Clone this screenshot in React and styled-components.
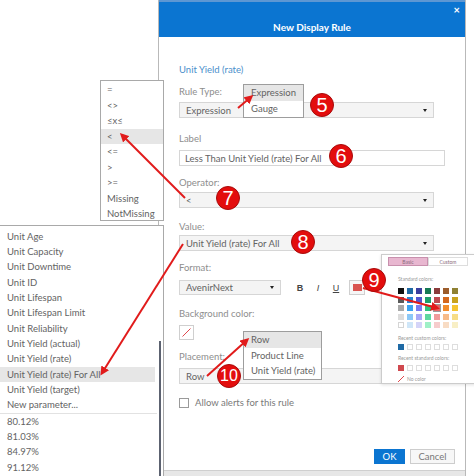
import React from 'react';
import styled, { createGlobalStyle } from 'styled-components';

const GlobalStyle = createGlobalStyle`
  html, body { margin: 0; padding: 0; background: #fff; }
  body { font-family: Lato, "Noto Sans", sans-serif; }
  * { box-sizing: border-box; }
`;

const Page = styled.div`
  position: relative;
  width: 474px;
  height: 476px;
  overflow: hidden;
  background: #fff;
  font-family: Lato, "Noto Sans", sans-serif;
`;

const Dialog = styled.div`
  margin-left: 158px;
  width: 308px;
  height: 476px;
  display: flex;
  flex-direction: column;
  border-left: 1px solid #b9b9b9;
  border-right: 1px solid #b9b9b9;
  background: #fff;
`;

const Header = styled.div`
  height: 37px;
  flex: none;
  background: #0b75d1;
  border-top: 2px solid #5d97d3;
  display: flex;
  flex-direction: column;
  color: #fff;
`;

const CloseRow = styled.div`
  height: 14px;
  display: flex;
  justify-content: flex-end;
  align-items: center;
  padding-right: 5px;
  font-size: 11px;
  font-weight: 700;
  line-height: 1;
`;

const Title = styled.div`
  margin-top: 4px;
  text-align: center;
  font-size: 10px;
  font-weight: 700;
  line-height: 14px;
`;

const Body = styled.div`
  flex: 1;
  display: flex;
  flex-direction: column;
  padding: 26px 10px 6px 20px;
`;

const BottomStrip = styled.div`
  height: 6px;
  flex: none;
  background: #e7e7e7;
  border-top: 1px solid #cfcfcf;
`;

const RuleTitle = styled.div`
  font-size: 9.5px;
  line-height: 14px;
  color: #4b8fcb;
`;

const FieldLabel = styled.div`
  margin-top: ${p => p.$mt}px;
  font-size: 9.5px;
  line-height: 13px;
  height: 13px;
  color: #8e8e8e;
`;

const Select = styled.div`
  margin-top: ${p => p.$mt}px;
  width: ${p => p.$w || 255}px;
  height: ${p => p.$h || 16}px;
  display: flex;
  align-items: center;
  justify-content: space-between;
  padding: 0 6px 0 6px;
  background: #f4f4f4;
  border: 1px solid #d6d6d6;
  font-size: 9.5px;
  color: #636363;
`;

const Caret = styled.span`
  width: 0;
  height: 0;
  border-left: 2px solid transparent;
  border-right: 2px solid transparent;
  border-top: 3px solid #222;
`;

const TextInput = styled.div`
  margin-top: ${p => p.$mt}px;
  width: 266px;
  height: 16px;
  display: flex;
  align-items: center;
  padding: 0 5px;
  background: #fff;
  border: 1px solid #d6d6d6;
  font-size: 9.5px;
  color: #636363;
`;

const FormatRow = styled.div`
  margin-top: 6px;
  display: flex;
  align-items: center;
  height: 15px;
`;

const StyleToggle = styled.span`
  width: 18px;
  text-align: center;
  font-family: "Liberation Sans", Arial, sans-serif;
  font-size: 9px;
  color: #444;
  font-weight: ${p => (p.$b ? 700 : 400)};
  font-style: ${p => (p.$i ? 'italic' : 'normal')};
  text-decoration: ${p => (p.$u ? 'underline' : 'none')};
`;

const ColorButton = styled.div`
  margin-left: 4px;
  width: 16px;
  height: 15px;
  border: 1px solid #cfcfcf;
  background: #f6f6f6;
  display: flex;
  align-items: center;
  justify-content: center;
  &::after {
    content: '';
    width: 9px;
    height: 7px;
    background: #d9534f;
  }
`;

const NoColorSwatch = styled.div`
  margin-top: 5px;
  width: 15px;
  height: 15px;
  border: 1px solid #cfcfcf;
  display: flex;
  align-items: center;
  justify-content: center;
`;

const CheckRow = styled.label`
  margin-top: 13px;
  display: flex;
  align-items: center;
  gap: 6px;
  font-size: 9.5px;
  color: #7a7a7a;
`;

const CheckBox = styled.span`
  width: 10px;
  height: 10px;
  border: 1px solid #9a9a9a;
  background: #fff;
`;

const ButtonRow = styled.div`
  margin-top: auto;
  display: flex;
  justify-content: flex-end;
  gap: 5px;
`;

const Button = styled.button`
  height: 15px;
  padding: 0;
  width: ${p => p.$w}px;
  font-family: Lato, "Noto Sans", sans-serif;
  font-size: 9.5px;
  border: 1px solid ${p => (p.$primary ? '#0b75d1' : '#cdcdcd')};
  background: ${p => (p.$primary ? '#0b75d1' : '#f7f7f7')};
  color: ${p => (p.$primary ? '#fff' : '#777')};
`;

/* dropdown menus laid over the dialog */
const Menu = styled.div`
  position: absolute;
  left: ${p => p.$x}px;
  top: ${p => p.$y}px;
  width: ${p => p.$w}px;
  height: ${p => (p.$h ? `${p.$h}px` : 'auto')};
  background: #fff;
  border: 1px solid ${p => p.$border || '#a9a9a9'};
  padding-top: ${p => p.$pt || 0}px;
  font-size: 9.5px;
  color: #636363;
`;

const MenuItem = styled.div`
  height: ${p => p.$h || 15.5}px;
  line-height: ${p => p.$h || 15.5}px;
  padding-left: ${p => p.$pl || 6}px;
  margin-right: ${p => p.$mr || 0}px;
  white-space: nowrap;
  background: ${p => (p.$active ? '#e6e6e6' : 'transparent')};
`;

const MenuDivider = styled.div`
  margin-right: 6px;
  border-top: 1px solid #e2e2e2;
`;

const ScrollThumb = styled.div`
  position: absolute;
  right: 2px;
  top: 115px;
  width: 2px;
  height: 135px;
  background: #5c6270;
`;

/* color picker */
const Picker = styled.div`
  position: absolute;
  left: 381px;
  top: 254px;
  width: 100px;
  height: 130px;
  background: #fff;
  border: 1px solid #cccccc;
  box-shadow: 0 1px 3px rgba(0, 0, 0, 0.12);
  padding: 2px 0 0 6px;
`;

const Tabs = styled.div`
  display: flex;
`;

const Tab = styled.div`
  width: 40px;
  height: 9px;
  line-height: 8px;
  text-align: center;
  font-size: 5px;
  color: #8a6c7c;
  background: ${p => (p.$active ? '#e8b7d0' : '#fff')};
  border: 1px solid ${p => (p.$active ? '#c890ad' : '#dddddd')};
`;

const PickerSection = styled.div`
  padding-left: 10px;
  display: flex;
  flex-direction: column;
`;

const Tiny = styled.div`
  margin-top: ${p => p.$mt}px;
  font-size: 5px;
  line-height: 6px;
  height: 6px;
  color: #9a9a9a;
  white-space: nowrap;
  display: flex;
  align-items: center;
  gap: 3px;
`;

const ColorGrid = styled.div`
  margin-top: ${p => p.$mt}px;
  display: grid;
  grid-template-columns: repeat(7, 6px);
  column-gap: 3px;
  row-gap: 2.5px;
`;

const Cell = styled.div`
  width: 6px;
  height: 6px;
  background: ${p => p.$c || '#fff'};
  border: ${p => (p.$empty ? '1px solid #dedede' : p.$c === '#ffffff' ? '1px solid #d5d5d5' : 'none')};
  outline: ${p => (p.$sel ? '1px solid #9a9a9a' : 'none')};
`;

const Badge = styled.div`
  position: absolute;
  left: ${p => p.$x - 12}px;
  top: ${p => p.$y - 12}px;
  width: 24px;
  height: 24px;
  border-radius: 50%;
  background: #e30d0d;
  border: 1px solid #a80b0b;
  color: #fff;
  display: flex;
  align-items: center;
  justify-content: center;
  font-family: "Liberation Sans", Arial, sans-serif;
  font-size: ${p => (p.$small ? 16 : 20)}px;
  line-height: 1;
`;

const Overlay = styled.svg`
  position: absolute;
  left: 0;
  top: 0;
  width: 474px;
  height: 476px;
  pointer-events: none;
`;

const operators = ['=', '<>', '≤x≤', '<', '<=', '>', '>=', 'Missing', 'NotMissing'];

const values = [
  'Unit Age',
  'Unit Capacity',
  'Unit Downtime',
  'Unit ID',
  'Unit Lifespan',
  'Unit Lifespan Limit',
  'Unit Reliability',
  'Unit Yield (actual)',
  'Unit Yield (rate)',
  'Unit Yield (rate) For All',
  'Unit Yield (target)',
  'New parameter...',
];

const percents = ['80.12%', '81.03%', '84.97%', '91.12%'];

const standardColors = [
  ['#111111', '#1f6aa5', '#3b3f9f', '#167a54', '#8a3b3b', '#9c5c2b', '#8f8133'],
  ['#5a5a5a', '#2785d4', '#5455cf', '#1d9e6b', '#bf4950', '#d4681e', '#c8a21d'],
  ['#a8a8a8', '#3aa3f2', '#7b7bf0', '#2fc27f', '#e26565', '#f28c2c', '#f5c531'],
  ['#dcdcdc', '#8cc8f7', '#a9a9f7', '#5fd79f', '#f09a9a', '#f7bb88', '#f7dd86'],
  ['#ffffff', '#cfe6f8', '#d4d4f8', '#9ff0c7', '#f6cccc', '#f8dcc4', '#f8efc6'],
];

const arrows = [
  [238, 108, 251, 97],
  [185, 198, 122, 135],
  [183, 244, 102, 373],
  [363, 288, 437, 308],
  [207, 376, 247, 340],
];

const badges = [
  [5, 322, 105],
  [6, 341, 156],
  [7, 228, 198],
  [8, 303, 242],
  [9, 374, 280],
  [10, 229, 376],
];

function RecentRow({ first }) {
  return (
    <ColorGrid $mt={first === '#1f6aa5' ? 3 : 4}>
      {Array.from({ length: 7 }).map((_, i) =>
        i === 0 ? <Cell key={i} $c={first} /> : <Cell key={i} $empty />
      )}
    </ColorGrid>
  );
}

export default function App() {
  return (
    <Page>
      <GlobalStyle />
      <Dialog>
        <Header>
          <CloseRow>×</CloseRow>
          <Title>New Display Rule</Title>
        </Header>
        <Body>
          <RuleTitle>Unit Yield (rate)</RuleTitle>

          <FieldLabel $mt={8}>Rule Type:</FieldLabel>
          <Select $mt={4}>
            <span>Expression</span>
            <Caret />
          </Select>

          <FieldLabel $mt={14}>Label</FieldLabel>
          <TextInput $mt={5}>Less Than Unit Yield (rate) For All</TextInput>

          <FieldLabel $mt={10}>Operator:</FieldLabel>
          <Select $mt={3}>
            <span>&lt;</span>
            <Caret />
          </Select>

          <FieldLabel $mt={12}>Value:</FieldLabel>
          <Select $mt={2}>
            <span>Unit Yield (rate) For All</span>
            <Caret />
          </Select>

          <FieldLabel $mt={10}>Format:</FieldLabel>
          <FormatRow>
            <Select $mt={0} $w={102} $h={15}>
              <span>AvenirNext</span>
              <Caret />
            </Select>
            <span style={{ width: 10 }} />
            <StyleToggle $b>B</StyleToggle>
            <StyleToggle $i>I</StyleToggle>
            <StyleToggle $u>U</StyleToggle>
            <ColorButton />
          </FormatRow>

          <FieldLabel $mt={12}>Background color:</FieldLabel>
          <NoColorSwatch>
            <svg width="9" height="9" viewBox="0 0 9 9">
              <line x1="0.5" y1="8.5" x2="8.5" y2="0.5" stroke="#e0474c" strokeWidth="1" />
            </svg>
          </NoColorSwatch>

          <FieldLabel $mt={10}>Placement:</FieldLabel>
          <Select $mt={5}>
            <span>Row</span>
            <Caret />
          </Select>

          <CheckRow>
            <CheckBox />
            Allow alerts for this rule
          </CheckRow>

          <ButtonRow>
            <Button $primary $w={31}>OK</Button>
            <Button $w={45}>Cancel</Button>
          </ButtonRow>
        </Body>
        <BottomStrip />
      </Dialog>

      <Menu $x={100} $y={80} $w={64} $h={141} $pt={1}>
        {operators.map(o => (
          <MenuItem key={o} $active={o === '<'}>
            {o}
          </MenuItem>
        ))}
      </Menu>

      <Menu $x={-1} $y={225} $w={165} $h={260} $pt={2.5}>
        {values.map(v => (
          <MenuItem key={v} $h={15.35} $pl={7} $mr={8} $active={v === 'Unit Yield (rate) For All'}>
            {v}
          </MenuItem>
        ))}
        <MenuDivider />
        {percents.map(v => (
          <MenuItem key={v} $h={15.35} $pl={7} $mr={8}>
            {v}
          </MenuItem>
        ))}
        <ScrollThumb />
      </Menu>

      <Menu $x={243} $y={84} $w={61} $border="#9d9d9d">
        <MenuItem $active $pl={7}>Expression</MenuItem>
        <MenuItem $pl={7} $h={16}>Gauge</MenuItem>
      </Menu>

      <Menu $x={243} $y={331} $w={79} $border="#9d9d9d">
        <MenuItem $active $pl={7}>Row</MenuItem>
        <MenuItem $pl={7}>Product Line</MenuItem>
        <MenuItem $pl={7}>Unit Yield (rate)</MenuItem>
      </Menu>

      <Picker>
        <Tabs>
          <Tab $active>Basic</Tab>
          <Tab>Custom</Tab>
        </Tabs>
        <PickerSection>
          <Tiny $mt={10}>Standard colors:</Tiny>
          <ColorGrid $mt={6}>
            {standardColors.flatMap((row, r) =>
              row.map((c, i) => <Cell key={`${r}-${i}`} $c={c} $sel={r === 2 && i === 4} />)
            )}
          </ColorGrid>
          <Tiny $mt={7}>Recent custom colors:</Tiny>
          <RecentRow first="#1f6aa5" />
          <Tiny $mt={5}>Recent standard colors:</Tiny>
          <RecentRow first="#d0494f" />
          <Tiny $mt={5}>
            <svg width="6" height="6" viewBox="0 0 6 6">
              <line x1="0" y1="6" x2="6" y2="0" stroke="#e0474c" strokeWidth="1" />
            </svg>
            No color
          </Tiny>
        </PickerSection>
      </Picker>

      <Overlay viewBox="0 0 474 476">
        <defs>
          <marker id="head" markerWidth="4.5" markerHeight="4.5" refX="3" refY="2.25" orient="auto" markerUnits="strokeWidth">
            <path d="M0,0 L4.5,2.25 L0,4.5 z" fill="#e11b1b" />
          </marker>
        </defs>
        {arrows.map(([x1, y1, x2, y2], i) => (
          <line
            key={i}
            x1={x1}
            y1={y1}
            x2={x2}
            y2={y2}
            stroke="#e11b1b"
            strokeWidth="2"
            markerEnd="url(#head)"
          />
        ))}
      </Overlay>

      {badges.map(([n, x, y]) => (
        <Badge key={n} $x={x} $y={y} $small={n >= 10}>
          {n}
        </Badge>
      ))}
    </Page>
  );
}
